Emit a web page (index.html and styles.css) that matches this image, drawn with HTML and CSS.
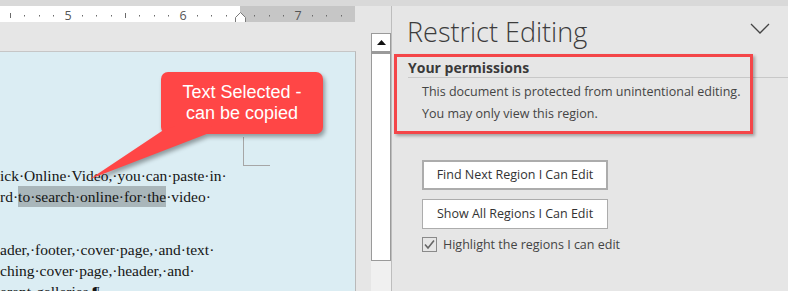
FILE: index.html
```html
<!DOCTYPE html>
<html>
<head>
<meta charset="utf-8">
<link rel="stylesheet" href="styles.css">
</head>
<body>
<div class="app">
  <div class="topstrip"></div>
  <div class="main">
    <div class="left">
      <div class="ruler">
        <svg width="355" height="16" viewBox="0 6 355 16">
          <rect x="0" y="6" width="240" height="16" fill="#ffffff"/>
          <rect x="240" y="6" width="115" height="16" fill="#c6c6c6"/>
          <g fill="#6a6a6a">
            <rect x="10" y="13" width="1" height="5"/>
            <rect x="24" y="15" width="1" height="1.5"/>
            <rect x="39" y="15" width="1" height="1.5"/>
            <rect x="53" y="15" width="1" height="1.5"/>
            <rect x="82" y="15" width="1" height="1.5"/>
            <rect x="96" y="15" width="1" height="1.5"/>
            <rect x="111" y="15" width="1" height="1.5"/>
            <rect x="125" y="13" width="1" height="5"/>
            <rect x="139" y="15" width="1" height="1.5"/>
            <rect x="154" y="15" width="1" height="1.5"/>
            <rect x="168" y="15" width="1" height="1.5"/>
            <rect x="197" y="15" width="1" height="1.5"/>
            <rect x="211" y="15" width="1" height="1.5"/>
            <rect x="226" y="15" width="1" height="1.5"/>
            <rect x="254" y="15" width="1" height="1.5"/>
            <rect x="269" y="15" width="1" height="1.5"/>
            <rect x="283" y="15" width="1" height="1.5"/>
            <rect x="312" y="15" width="1" height="1.5"/>
            <rect x="326" y="15" width="1" height="1.5"/>
            <rect x="341" y="15" width="1" height="1.5"/>
          </g>
          <g class="rnum" fill="#555" text-anchor="middle">
            <text x="68" y="19.5">5</text>
            <text x="183" y="19.5">6</text>
            <text x="298" y="19.5">7</text>
          </g>
          <path d="M240.5 12.5 L245.5 17.5 L245.5 23.5 L235.5 23.5 L235.5 17.5 Z" fill="#ffffff" stroke="#7a7a7a" stroke-width="1"/>
        </svg>
      </div>
      <div class="docarea">
        <div class="page">
          <div class="cropmark"></div>
          <div class="doctext">
            <div class="ln">ick·Online·Video,·you·can·paste·in·</div>
            <div class="ln">rd·<span class="sel">to·search·online·for·the</span>·video·</div>
            <div class="ln"></div>
            <div class="ln gap">ader,·footer,·cover·page,·and·text·</div>
            <div class="ln">ching·cover·page,·header,·and·</div>
            <div class="ln">erent·galleries.¶</div>
          </div>
        </div>
        <div class="scrollbar">
          <div class="sb-up">
            <svg width="9" height="5" viewBox="0 0 9 5"><path d="M4.5 0 L9 5 L0 5 Z" fill="#111"/></svg>
          </div>
          <div class="sb-thumb"></div>
          <div class="sb-track"></div>
        </div>
      </div>
    </div>
    <div class="panel">
      <div class="phead">
        <h1 class="ptitle">Restrict Editing</h1>
        <svg class="chev" width="20" height="11" viewBox="0 0 20 11"><path d="M1 1 L10 10 L19 1" fill="none" stroke="#444" stroke-width="1.3"/></svg>
      </div>
      <div class="perm">
        <h2 class="perm-title">Your permissions</h2>
        <div class="perm-body">
          <p class="perm-text">This document is protected from unintentional editing.</p>
          <p class="perm-text">You may only view this region.</p>
        </div>
      </div>
      <div class="actions">
        <button class="btn btn-focus">Find Next Region I Can Edit</button>
        <button class="btn">Show All Regions I Can Edit</button>
        <label class="chk"><span class="box"><svg width="13" height="13" viewBox="0 0 13 13"><path d="M2 6.5 L5 10 L11 2.5" fill="none" stroke="#666" stroke-width="1.6"/></svg></span>Highlight the regions I can edit</label>
      </div>
    </div>
  </div>
  <div class="redbox"></div>
  <svg class="callout" width="340" height="200" viewBox="0 0 340 200">
    <g class="callout-shape">
      <rect x="161" y="72" width="162" height="62" rx="7" fill="#ff4646"/>
      <polygon points="175,126 212,126 208,133.5 90,179 162,131" fill="#ff4646"/>
    </g>
    <text x="242" y="98" text-anchor="middle" class="ctext">Text Selected -</text>
    <text x="242" y="119" text-anchor="middle" class="ctext">can be copied</text>
  </svg>
</div>
</body>
</html>
```

FILE: styles.css
```css
* { box-sizing: border-box; }
html, body { margin: 0; padding: 0; }
body {
  width: 788px;
  height: 291px;
  overflow: hidden;
  background: #e6e6e6;
  font-family: "Open Sans", "Noto Sans", sans-serif;
}
.app {
  position: relative;
  width: 788px;
  height: 291px;
  display: flex;
  flex-direction: column;
  overflow: hidden;
}
.topstrip { height: 6px; flex: none; background: #d9d9d9; }
.main { flex: 1; display: flex; min-height: 0; }
.left {
  width: 392px;
  flex: none;
  display: flex;
  flex-direction: column;
  border-right: 1px solid #bdbdbd;
}
.ruler { height: 16px; flex: none; }
.ruler svg { display: block; }
.rnum { font-family: "Open Sans", sans-serif; font-size: 12.5px; }
.docarea { flex: 1; display: flex; min-height: 0; }
.page {
  position: relative;
  width: 356px;
  flex: none;
  margin-top: 29px;
  background: #dbedf3;
  border-top: 1px solid #c6c6c6;
  border-right: 1px solid #b9b9b9;
  overflow: hidden;
}
.cropmark {
  position: absolute;
  left: 243px;
  top: 85px;
  width: 27px;
  height: 29px;
  border-left: 1px solid #a6a6a6;
  border-bottom: 1px solid #a6a6a6;
}
.doctext {
  padding-top: 113px;
  font-family: "Liberation Serif", serif;
  font-size: 15.5px;
  line-height: 21px;
  color: #151515;
  white-space: nowrap;
}
.ln { height: 21px; }
.gap { margin-top: 11px; }
.sel { display: inline-block; background: #a9b6ba; }
.scrollbar {
  width: 20px;
  flex: none;
  margin-left: 15px;
  margin-top: 11px;
  display: flex;
  flex-direction: column;
}
.sb-up {
  height: 19px;
  flex: none;
  background: #fff;
  border: 1px solid #9a9a9a;
  display: flex;
  align-items: center;
  justify-content: center;
}
.sb-up svg { display: block; }
.sb-thumb {
  height: 209px;
  flex: none;
  background: #fff;
  border: 1px solid #9a9a9a;
  border-top-width: 2px;
}
.sb-track { flex: 1; background: #f0f0f0; }

.panel { flex: 1; display: flex; flex-direction: column; color: #444; }
.phead {
  display: flex;
  justify-content: space-between;
  align-items: flex-start;
  padding: 8px 18px 0 15px;
}
.ptitle {
  margin: 0;
  font-size: 27px;
  line-height: 36px;
  font-weight: 300;
  color: #3c3c3c;
}
.chev { display: block; margin-top: 9px; }
.perm { margin-top: 8px; }
.perm-title {
  margin: 0 0 0 16px;
  font-size: 14px;
  line-height: 19px;
  font-weight: 700;
  color: #3a3a3a;
  border-bottom: 1px solid #c8c8c8;
}
.perm-body { margin-top: 3px; padding-left: 30px; }
.perm-text { margin: 0; font-size: 12.5px; line-height: 22px; color: #444; }
.actions {
  margin-top: 35px;
  padding-left: 30px;
  display: flex;
  flex-direction: column;
  align-items: flex-start;
}
.btn {
  width: 186px;
  height: 30px;
  margin: 0;
  padding: 0;
  background: #fff;
  border: 1px solid #acacac;
  font: 12.5px/16px "Open Sans", sans-serif;
  color: #333;
}
.btn-focus { border-width: 2px; }
.btn + .btn { margin-top: 9px; }
.chk {
  margin-top: 7px;
  display: flex;
  align-items: center;
  gap: 6px;
  font-size: 12.5px;
  color: #444;
}
.box {
  width: 15px;
  height: 15px;
  border: 1px solid #8a8a8a;
  display: flex;
  align-items: center;
  justify-content: center;
}
.box svg { display: block; }
.redbox {
  position: absolute;
  left: 394px;
  top: 54px;
  width: 359px;
  height: 80px;
  border: 3px solid #f44649;
  box-shadow: 2px 2px 3px rgba(0, 0, 0, 0.3);
}
.callout {
  position: absolute;
  left: 0;
  top: 0;
}
.callout-shape { filter: drop-shadow(2px 3px 2px rgba(0, 0, 0, 0.35)); }
.ctext { font-family: "Liberation Sans", Arial, sans-serif; font-size: 18px; fill: #ffffff; }
```
